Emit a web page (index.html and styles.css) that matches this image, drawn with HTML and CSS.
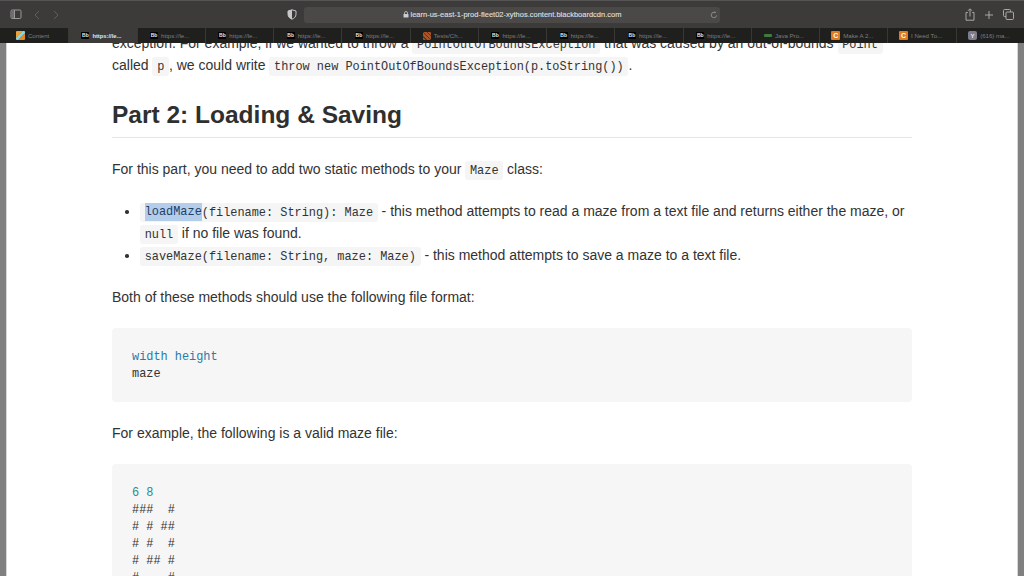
FILE: index.html
```html
<!DOCTYPE html>
<html lang="en">
<head>
<meta charset="utf-8">
<title>Part 2: Loading &amp; Saving</title>
<link rel="stylesheet" href="styles.css">
</head>
<body>
<div class="app">
  <header class="chrome">
    <div class="toolbar">
      <div class="tools-left">
        <svg class="ico" width="12" height="11" viewBox="0 0 12 11"><rect x="1" y="1" width="10" height="8.5" rx="1.2" fill="none" stroke="#9a9a9a"/><path d="M4.5 1v8.5" stroke="#9a9a9a"/><path d="M1.5 2h2.5v7H1.5z" fill="#6f6f6f"/></svg>
        <svg class="ico" width="8" height="12" viewBox="0 0 8 12"><path d="M6 2L2 6l4 4" fill="none" stroke="#5e5e5e" stroke-width="1"/></svg>
        <svg class="ico" width="8" height="12" viewBox="0 0 8 12"><path d="M2 2l4 4-4 4" fill="none" stroke="#5e5e5e" stroke-width="1"/></svg>
      </div>
      <div class="address-wrap">
        <svg class="shield" width="10" height="11" viewBox="0 0 10 11"><path d="M5 .8L9 2v3.2c0 2.5-1.8 4.2-4 5-2.2-.8-4-2.5-4-5V2z" fill="none" stroke="#c8c8c8"/><path d="M5 .8L1 2v3.2c0 2.5 1.8 4.2 4 5z" fill="#c8c8c8"/></svg>
        <div class="address">
          <span class="url"><svg class="lock" width="6" height="7" viewBox="0 0 6 7"><path d="M1.5 3V2a1.5 1.5 0 013 0v1" fill="none" stroke="#ccc" stroke-width=".8"/><rect x=".5" y="3" width="5" height="3.6" rx=".6" fill="#ccc"/></svg>learn-us-east-1-prod-fleet02-xythos.content.blackboardcdn.com</span>
          <svg class="reload" width="8" height="8" viewBox="0 0 8 8"><path d="M6.6 4.4A2.7 2.7 0 114 1.3h1.2" fill="none" stroke="#999" stroke-width=".8"/><path d="M4.6.2l1.4 1.1-1.4 1.1z" fill="#999"/></svg>
        </div>
      </div>
      <div class="tools-right">
        <svg width="10" height="13" viewBox="0 0 10 13"><path d="M2.8 4.5H1v7.7h8V4.5H7.2M5 8.5V1M3 2.8L5 .8l2 2" fill="none" stroke="#a8a8a8"/></svg>
        <svg width="10" height="10" viewBox="0 0 10 10"><path d="M5 1v8M1 5h8" stroke="#a8a8a8"/></svg>
        <svg width="11" height="11" viewBox="0 0 11 11"><rect x=".5" y=".5" width="7" height="7" rx="1" fill="none" stroke="#a8a8a8"/><rect x="3" y="3" width="7.5" height="7.5" rx="1" fill="#3a3938" stroke="#a8a8a8"/></svg>
      </div>
    </div>
    <nav class="tabs">
      <div class="tab"><span class="fav fav-content"></span><span>Content</span></div>
      <div class="tab active"><span class="fav fav-bb">Bb</span><span>https://le...</span></div>
      <div class="tab"><span class="fav fav-bb">Bb</span><span>https://le...</span></div>
      <div class="tab"><span class="fav fav-bb">Bb</span><span>https://le...</span></div>
      <div class="tab"><span class="fav fav-bb">Bb</span><span>https://le...</span></div>
      <div class="tab"><span class="fav fav-bb">Bb</span><span>https://le...</span></div>
      <div class="tab"><span class="fav fav-tests"></span><span>Tests/Ch...</span></div>
      <div class="tab"><span class="fav fav-bb">Bb</span><span>https://le...</span></div>
      <div class="tab"><span class="fav fav-bb">Bb</span><span>https://le...</span></div>
      <div class="tab"><span class="fav fav-bb">Bb</span><span>https://le...</span></div>
      <div class="tab"><span class="fav fav-bb">Bb</span><span>https://le...</span></div>
      <div class="tab"><span class="fav fav-java"></span><span>Java Pro...</span></div>
      <div class="tab"><span class="fav fav-c">C</span><span>Make A 2...</span></div>
      <div class="tab"><span class="fav fav-c">C</span><span>I Need To...</span></div>
      <div class="tab"><span class="fav fav-y">Y</span><span>(616) ma...</span></div>
    </nav>
  </header>
  <div class="viewport">
    <main class="page">
      <p class="intro">exception. For example, if we wanted to throw a <code>PointOutOfBoundsException</code> that was caused by an out-of-bounds <code>Point</code><br>called <code>p</code>, we could write <code>throw new PointOutOfBoundsException(p.toString())</code>.</p>
      <h2>Part 2: Loading &amp; Saving</h2>
      <p class="lead">For this part, you need to add two static methods to your <code>Maze</code> class:</p>
      <ul>
        <li><code><mark>loadMaze</mark>(filename: String): Maze</code> - this method attempts to read a maze from a text file and returns either the maze, or <code>null</code> if no file was found.</li>
        <li><code>saveMaze(filename: String, maze: Maze)</code> - this method attempts to save a maze to a text file.</li>
      </ul>
      <p>Both of these methods should use the following file format:</p>
      <pre><span class="kw">width height</span>
maze</pre>
      <p>For example, the following is a valid maze file:</p>
      <pre><span class="num">6 8</span>
###  #
# # ##
# #  #
# ## #
#    #</pre>
    </main>
  </div>
</div>
</body>
</html>
```

FILE: styles.css
```css
* { box-sizing: border-box; }
html, body { margin: 0; height: 100%; overflow: hidden; }
body { background: #fff; font-family: "Liberation Sans", Arial, sans-serif; }
.app { width: 1024px; height: 576px; display: flex; flex-direction: column; overflow: hidden; }

.chrome { flex: none; height: 43px; background: #3a3938; position: relative; z-index: 2; }
.toolbar { height: 28px; display: flex; align-items: center; padding: 0 10px; border-top: 1px solid #555; background: #3c3b3a; }
.tools-left { width: 277px; display: flex; align-items: center; gap: 11px; }
.address-wrap { display: flex; align-items: center; gap: 7px; }
.address { width: 416px; height: 16px; border-radius: 3px; background: #4a4948; display: flex; align-items: center; justify-content: center; position: relative; }
.url { font-size: 7.5px; color: #dcdcdc; font-weight: 400; -webkit-text-stroke: .15px #dcdcdc; display: flex; align-items: center; gap: 2px; white-space: nowrap; }
.reload { position: absolute; right: 2px; top: 4px; }
.tools-right { margin-left: auto; display: flex; align-items: center; gap: 9px; }

.tabs { height: 15px; display: grid; grid-template-columns: repeat(15, 1fr); background: #1f1f1e; }
.tab { display: flex; align-items: center; justify-content: center; gap: 3px; min-width: 0; padding-right: 3px; border-left: 1px solid #383837; font-size: 6.1px; color: #7e7e7e; white-space: nowrap; overflow: hidden; }
.tab:first-child { border-left: 0; }
.tab.active { background: #3c3b3a; color: #e4e4e4; font-weight: 700; font-size: 5.8px; }
.fav { width: 7px; height: 7px; flex: none; display: flex; align-items: center; justify-content: center; font-size: 5px; font-weight: 700; line-height: 1; border-radius: 1px; }
.fav-bb { width: 8px; background: #000; color: #e8e8e8; }
.fav-content { width: 9px; height: 9px; background: linear-gradient(135deg, #e8a23a 0 40%, #8fd3df 40% 60%, #e08a2a 60%); }
.fav-tests { width: 8px; height: 8px; background: repeating-linear-gradient(45deg, #a8552b 0 2px, #5a3a28 2px 3px); }
.fav-java { width: 8px; height: 3px; background: #3f7a3f; }
.fav-c { width: 9px; height: 9px; background: #e07a1f; color: #fff; font-size: 7px; }
.fav-y { width: 9px; height: 9px; background: #7d7d8c; color: #e8e8e8; font-size: 6px; border-radius: 2px; }

.viewport { flex: 1; min-height: 0; overflow: hidden; background: #808080; padding: 0 6px; }
.page { background: #fff; border-left: 1px solid #d8d8d8; border-right: 1px solid #d8d8d8; padding: 0 105px; margin-top: -11px; height: calc(100% + 11px); color: #333; font-size: 14px; line-height: 22px; overflow: hidden; }
p { margin: 0 0 20px; }
.intro { margin-bottom: 0; }
code { font-family: "Liberation Mono", monospace; font-size: 11.9px; line-height: 1; background: #f5f5f5; border-radius: 3px; padding: 2.5px 4.7px; vertical-align: 1px; }
mark { background: #b4cdeb; color: #1f3f66; padding: 2px 0; }
h2 { margin: 23px 0 20px; padding-bottom: 6px; border-bottom: 1px solid #e6e6e6; font-size: 24.5px; line-height: 32px; font-weight: 700; color: #2f2f2f; }
ul { margin: 0 0 20px; padding: 0 0 0 28px; list-style: none; }
li { position: relative; }
li::before { content: ""; position: absolute; left: -15px; top: 10px; width: 3.5px; height: 3.5px; border-radius: 50%; background: #333; }
pre { margin: 0 0 20px; padding: 21px 20px 19px; background: #f6f6f6; border-radius: 4px; font-family: "Liberation Mono", monospace; font-size: 11.9px; line-height: 17px; color: #333; }
.kw { color: #2a7aaa; }
.num { color: #2f8a8f; }
```
